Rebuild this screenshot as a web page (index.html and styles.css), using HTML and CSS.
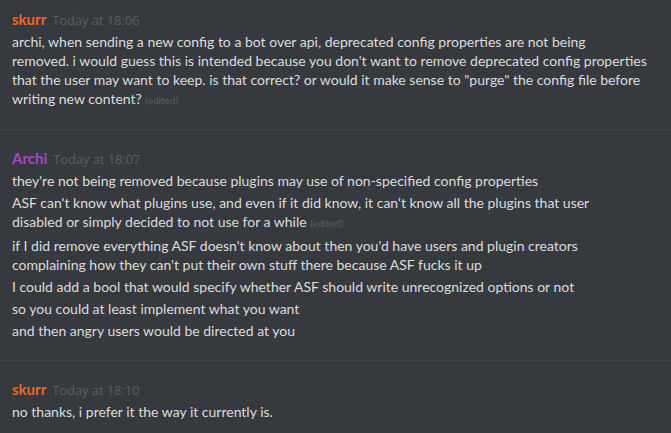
FILE: index.html
```html
<!DOCTYPE html>
<html>
<head>
<meta charset="utf-8">
<link rel="stylesheet" href="styles.css">
</head>
<body>
<div class="chat">
  <div class="group first">
    <div class="head"><span class="user orange">skurr</span><span class="time">Today at 18:06</span></div>
    <div class="msg">archi, when sending a new config to a bot over api, deprecated config properties are not being<br>removed. i would guess this is intended because you don't want to remove deprecated config properties<br>that the user may want to keep. is that correct? or would it make sense to "purge" the config file before<br>writing new content? <span class="edited">(edited)</span></div>
  </div>
  <div class="group">
    <div class="head"><span class="user purple">Archi</span><span class="time">Today at 18:07</span></div>
    <div class="msg">they're not being removed because plugins may use of non-specified config properties</div>
    <div class="msg">ASF can't know what plugins use, and even if it did know, it can't know all the plugins that user<br>disabled or simply decided to not use for a while <span class="edited">(edited)</span></div>
    <div class="msg">if I did remove everything ASF doesn't know about then you'd have users and plugin creators<br>complaining how they can't put their own stuff there because ASF fucks it up</div>
    <div class="msg">I could add a bool that would specify whether ASF should write unrecognized options or not</div>
    <div class="msg">so you could at least implement what you want</div>
    <div class="msg">and then angry users would be directed at you</div>
  </div>
  <div class="group">
    <div class="head"><span class="user orange">skurr</span><span class="time">Today at 18:10</span></div>
    <div class="msg">no thanks, i prefer it the way it currently is.</div>
  </div>
</div>
</body>
</html>
```
FILE: styles.css
```css
html, body {
  margin: 0;
  padding: 0;
  background: #36393e;
}
body {
  width: 671px;
  height: 433px;
  overflow: hidden;
  font-family: Lato, "Noto Sans", sans-serif;
}
.chat {
  display: flex;
  flex-direction: column;
}
.group {
  padding: 18px 2px 20px 12px;
  border-bottom: 1px solid #40434a;
}
.group.first {
  padding-top: 9px;
  padding-bottom: 19px;
}
.group:last-child {
  border-bottom: none;
}
.head {
  display: flex;
  align-items: baseline;
  gap: 6px;
  height: 20px;
  line-height: 20px;
  margin-bottom: 1px;
}
.user {
  font-size: 15px;
  font-weight: bold;
}
.orange { color: #f26522; }
.purple { color: #a646cc; }
.time {
  font-family: "Open Sans", sans-serif;
  font-size: 13px;
  letter-spacing: -0.1px;
  color: #5b5e63;
}
.msg {
  font-size: 14px;
  line-height: 19px;
  color: #dcddde;
  margin-top: 3px;
  white-space: nowrap;
}
.edited {
  font-size: 10px;
  color: #5b5e63;
}
```
